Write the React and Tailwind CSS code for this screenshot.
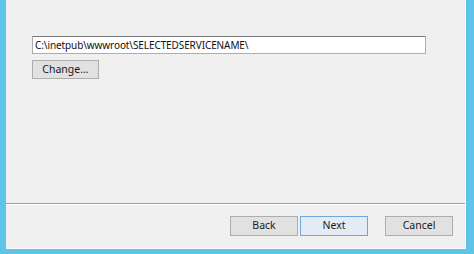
import React from 'react';

function WinButton({ children, primary = false }) {
  return (
    <button
      className={`w-[68px] h-[20px] flex items-center justify-center text-[10.5px] text-[#1a1a1a] border ${
        primary ? 'border-[#6fa6dc] bg-[#e3ecf4]' : 'border-[#adadad] bg-[#e1e1e1]'
      }`}
    >
      {children}
    </button>
  );
}

export default function App() {
  return (
    <div className="w-[474px] h-[254px] flex flex-col bg-[#2d4b5c] overflow-hidden" style={{ fontFamily: '"Noto Sans", "Open Sans", sans-serif' }}>
      <div className="flex-1 flex bg-[#5ec4e8] pb-[5px]">
        <div className="w-[6px]" />
        <div className="flex-1 flex flex-col bg-[#f0f0f0] border-r border-b border-[#fafafa]">
          <div className="flex-1 pt-[36px] pl-[26px] pr-[39px]">
            <div className="h-[18px] bg-white border border-[#abadb3] border-t-[#7a7a7a] flex items-center pl-[2px] text-[10px] tracking-[-0.1px] text-[#111] leading-none">
              C:\inetpub\wwwroot\SELECTEDSERVICENAME\
            </div>
            <div className="mt-[6px]">
              <button className="w-[67px] h-[19px] flex items-center justify-center text-[10.5px] text-[#1a1a1a] bg-[#e1e1e1] border border-[#adadad]">
                Change...
              </button>
            </div>
          </div>
          <div className="h-px bg-[#a0a0a0] border-b border-white box-content" />
          <div className="h-[43px] flex items-start justify-end pt-[11px] pr-[12px]">
            <div className="flex gap-[2px]">
              <WinButton>Back</WinButton>
              <WinButton primary>Next</WinButton>
            </div>
            <div className="ml-[17px]">
              <WinButton>Cancel</WinButton>
            </div>
          </div>
        </div>
        <div className="w-[8px]" />
      </div>
    </div>
  );
}
